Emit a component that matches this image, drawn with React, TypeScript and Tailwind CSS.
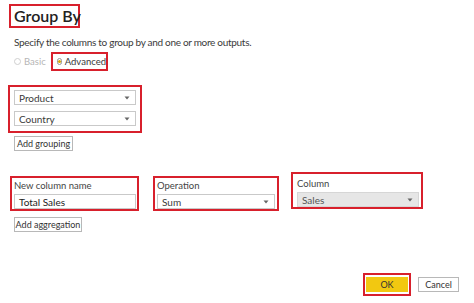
import React from "react";

const font = { fontFamily: 'Lato, "Noto Sans", sans-serif' };

function Caret() {
  return (
    <svg width="6" height="4" viewBox="0 0 6 4" className="shrink-0">
      <path d="M0.5 0.5 L5.5 0.5 L3 3.5 Z" fill="#666" />
    </svg>
  );
}

function Select({ value, grey, width }: { value: string; grey?: boolean; width: string }) {
  return (
    <div
      className={`${width} h-[15px] flex items-center justify-between pl-[4px] pr-[5px] border text-[10px] leading-none ${
        grey ? "bg-[#e6e6e6] border-[#d6d6d6] text-[#555]" : "bg-white border-[#c9c9c9] text-[#3a3a3a]"
      }`}
    >
      <span>{value}</span>
      <Caret />
    </div>
  );
}

function SmallButton({ label, width }: { label: string; width: string }) {
  return (
    <div
      className={`${width} h-[15px] flex items-center justify-center border border-[#b8b8b8] bg-white text-[9px] leading-none text-[#333] whitespace-nowrap`}
    >
      {label}
    </div>
  );
}

export default function App() {
  return (
    <div className="w-[474px] h-[303px] bg-white overflow-hidden flex flex-col" style={font}>
      {/* title */}
      <div className="ml-[9px] mt-[4px] w-[71px] h-[24px] border-2 border-[#d8202c] flex items-center pl-[3px]">
        <span className="text-[16px] leading-none font-semibold text-[#222] whitespace-nowrap">Group By</span>
      </div>

      <div className="ml-[14px] mt-[9px] text-[10px] tracking-[-0.3px] leading-none text-[#3a3a3a] whitespace-nowrap">
        Specify the columns to group by and one or more outputs.
      </div>

      {/* radio row */}
      <div className="flex items-center ml-[14px] mt-[5px]">
        <div className="flex items-center gap-[3px] text-[9.5px] leading-none text-[#b5b5b5]">
          <span className="w-[7px] h-[7px] rounded-full border border-[#cfcfcf]" />
          <span>Basic</span>
        </div>
        <div className="ml-[5px] w-[57px] h-[19px] border-2 border-[#d8202c] flex items-center pl-[4px] gap-[3px]">
          <span className="w-[7px] h-[7px] rounded-full border border-[#999] flex items-center justify-center">
            <span className="w-[3px] h-[3px] rounded-full bg-[#d6a800]" />
          </span>
          <span className="text-[9.5px] leading-none text-[#3a3a3a]">Advanced</span>
        </div>
      </div>

      {/* grouping */}
      <div className="ml-[8px] mt-[14px] w-[134px] h-[48px] border-2 border-[#d8202c] flex flex-col pl-[4px] pt-[3px] gap-[6px]">
        <Select value="Product" width="w-[122px]" />
        <Select value="Country" width="w-[122px]" />
      </div>
      <div className="ml-[14px] mt-[3px]">
        <SmallButton label="Add grouping" width="w-[59px]" />
      </div>

      {/* aggregation */}
      <div className="flex items-start ml-[10px] mt-[21px]">
        <div className="mt-[4px] w-[129px] h-[35px] border-2 border-[#d8202c] flex flex-col pl-[2px] pt-[2px]">
          <span className="text-[9.5px] leading-none text-[#444] h-[12px] flex items-center">New column name</span>
          <div className="mt-[2px] w-[122px] h-[15px] border border-[#c9c9c9] bg-white flex items-center pl-[4px] text-[10px] leading-none text-[#222]">
            Total Sales
          </div>
        </div>
        <div className="ml-[14px] mt-[4px] w-[126px] h-[35px] border-2 border-[#d8202c] flex flex-col pl-[2px] pt-[2px]">
          <span className="text-[9.5px] leading-none text-[#444] h-[12px] flex items-center">Operation</span>
          <div className="mt-[2px]">
            <Select value="Sum" width="w-[118px]" />
          </div>
        </div>
        <div className="ml-[12px] w-[132px] h-[37px] border-2 border-[#d8202c] flex flex-col pl-[4px] pt-[4px]">
          <span className="text-[9.5px] leading-none text-[#444] h-[12px] flex items-center">Column</span>
          <div className="mt-[2px]">
            <Select value="Sales" grey width="w-[122px]" />
          </div>
        </div>
      </div>
      <div className="ml-[14px] mt-[6px]">
        <SmallButton label="Add aggregation" width="w-[68px]" />
      </div>

      {/* footer */}
      <div className="flex items-center justify-end mt-[41px] mr-[15px]">
        <div className="w-[48px] h-[23px] border-2 border-[#d8202c] flex items-center justify-center">
          <div className="w-[42px] h-[15px] bg-[#f2c811] flex items-center justify-center text-[9px] leading-none text-[#333]">
            OK
          </div>
        </div>
        <div className="ml-[7px]">
          <SmallButton label="Cancel" width="w-[41px]" />
        </div>
      </div>
    </div>
  );
}
